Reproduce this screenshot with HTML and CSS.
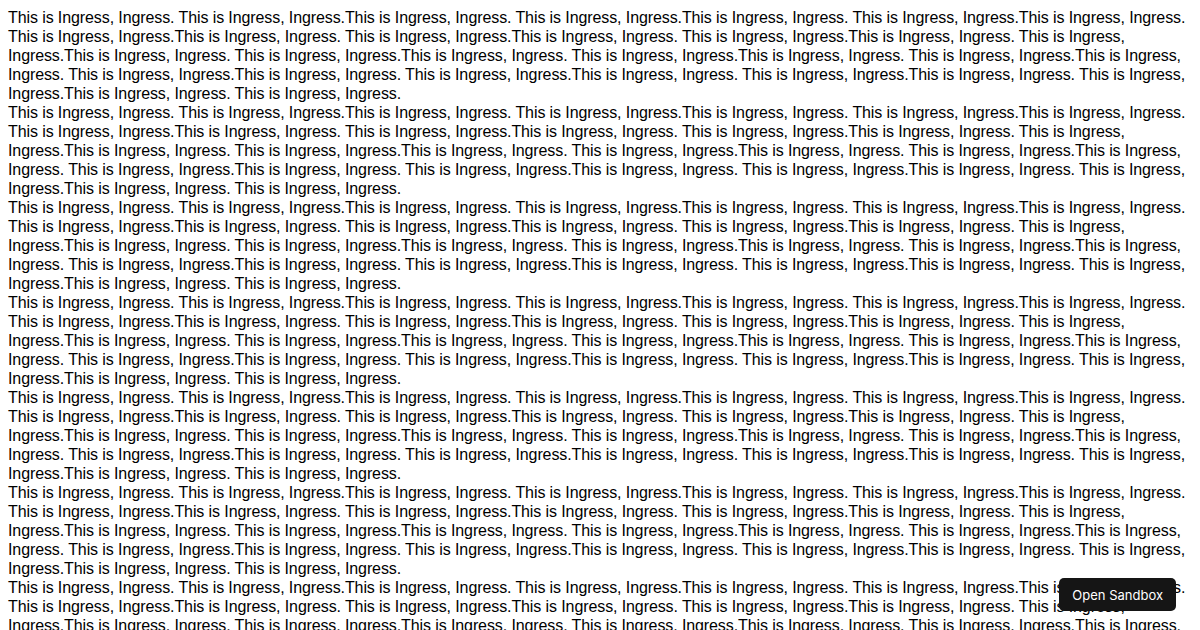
FILE: index.html
```html
<!DOCTYPE html>
<html lang="en">
<head>
<meta charset="utf-8">
<title>FolderFlip</title>
<link rel="stylesheet" href="styles.css">
</head>
<body>
<div class="page">
  <div class="text">This is Ingress, Ingress. This is Ingress, Ingress.This is Ingress, Ingress. This is Ingress, Ingress.This is Ingress, Ingress. This is Ingress, Ingress.This is Ingress, Ingress. This is Ingress, Ingress.This is Ingress, Ingress. This is Ingress, Ingress.This is Ingress, Ingress. This is Ingress, Ingress.This is Ingress, Ingress. This is Ingress, Ingress.This is Ingress, Ingress. This is Ingress, Ingress.This is Ingress, Ingress. This is Ingress, Ingress.This is Ingress, Ingress. This is Ingress, Ingress.This is Ingress, Ingress. This is Ingress, Ingress.This is Ingress, Ingress. This is Ingress, Ingress.This is Ingress, Ingress. This is Ingress, Ingress.This is Ingress, Ingress. This is Ingress, Ingress.This is Ingress, Ingress. This is Ingress, Ingress.</div>
  <div class="text">This is Ingress, Ingress. This is Ingress, Ingress.This is Ingress, Ingress. This is Ingress, Ingress.This is Ingress, Ingress. This is Ingress, Ingress.This is Ingress, Ingress. This is Ingress, Ingress.This is Ingress, Ingress. This is Ingress, Ingress.This is Ingress, Ingress. This is Ingress, Ingress.This is Ingress, Ingress. This is Ingress, Ingress.This is Ingress, Ingress. This is Ingress, Ingress.This is Ingress, Ingress. This is Ingress, Ingress.This is Ingress, Ingress. This is Ingress, Ingress.This is Ingress, Ingress. This is Ingress, Ingress.This is Ingress, Ingress. This is Ingress, Ingress.This is Ingress, Ingress. This is Ingress, Ingress.This is Ingress, Ingress. This is Ingress, Ingress.This is Ingress, Ingress. This is Ingress, Ingress.</div>
  <div class="text">This is Ingress, Ingress. This is Ingress, Ingress.This is Ingress, Ingress. This is Ingress, Ingress.This is Ingress, Ingress. This is Ingress, Ingress.This is Ingress, Ingress. This is Ingress, Ingress.This is Ingress, Ingress. This is Ingress, Ingress.This is Ingress, Ingress. This is Ingress, Ingress.This is Ingress, Ingress. This is Ingress, Ingress.This is Ingress, Ingress. This is Ingress, Ingress.This is Ingress, Ingress. This is Ingress, Ingress.This is Ingress, Ingress. This is Ingress, Ingress.This is Ingress, Ingress. This is Ingress, Ingress.This is Ingress, Ingress. This is Ingress, Ingress.This is Ingress, Ingress. This is Ingress, Ingress.This is Ingress, Ingress. This is Ingress, Ingress.This is Ingress, Ingress. This is Ingress, Ingress.</div>
  <div class="text">This is Ingress, Ingress. This is Ingress, Ingress.This is Ingress, Ingress. This is Ingress, Ingress.This is Ingress, Ingress. This is Ingress, Ingress.This is Ingress, Ingress. This is Ingress, Ingress.This is Ingress, Ingress. This is Ingress, Ingress.This is Ingress, Ingress. This is Ingress, Ingress.This is Ingress, Ingress. This is Ingress, Ingress.This is Ingress, Ingress. This is Ingress, Ingress.This is Ingress, Ingress. This is Ingress, Ingress.This is Ingress, Ingress. This is Ingress, Ingress.This is Ingress, Ingress. This is Ingress, Ingress.This is Ingress, Ingress. This is Ingress, Ingress.This is Ingress, Ingress. This is Ingress, Ingress.This is Ingress, Ingress. This is Ingress, Ingress.This is Ingress, Ingress. This is Ingress, Ingress.</div>
  <div class="text">This is Ingress, Ingress. This is Ingress, Ingress.This is Ingress, Ingress. This is Ingress, Ingress.This is Ingress, Ingress. This is Ingress, Ingress.This is Ingress, Ingress. This is Ingress, Ingress.This is Ingress, Ingress. This is Ingress, Ingress.This is Ingress, Ingress. This is Ingress, Ingress.This is Ingress, Ingress. This is Ingress, Ingress.This is Ingress, Ingress. This is Ingress, Ingress.This is Ingress, Ingress. This is Ingress, Ingress.This is Ingress, Ingress. This is Ingress, Ingress.This is Ingress, Ingress. This is Ingress, Ingress.This is Ingress, Ingress. This is Ingress, Ingress.This is Ingress, Ingress. This is Ingress, Ingress.This is Ingress, Ingress. This is Ingress, Ingress.This is Ingress, Ingress. This is Ingress, Ingress.</div>
  <div class="text">This is Ingress, Ingress. This is Ingress, Ingress.This is Ingress, Ingress. This is Ingress, Ingress.This is Ingress, Ingress. This is Ingress, Ingress.This is Ingress, Ingress. This is Ingress, Ingress.This is Ingress, Ingress. This is Ingress, Ingress.This is Ingress, Ingress. This is Ingress, Ingress.This is Ingress, Ingress. This is Ingress, Ingress.This is Ingress, Ingress. This is Ingress, Ingress.This is Ingress, Ingress. This is Ingress, Ingress.This is Ingress, Ingress. This is Ingress, Ingress.This is Ingress, Ingress. This is Ingress, Ingress.This is Ingress, Ingress. This is Ingress, Ingress.This is Ingress, Ingress. This is Ingress, Ingress.This is Ingress, Ingress. This is Ingress, Ingress.This is Ingress, Ingress. This is Ingress, Ingress.</div>
  <div class="text">This is Ingress, Ingress. This is Ingress, Ingress.This is Ingress, Ingress. This is Ingress, Ingress.This is Ingress, Ingress. This is Ingress, Ingress.This is Ingress, Ingress. This is Ingress, Ingress.This is Ingress, Ingress. This is Ingress, Ingress.This is Ingress, Ingress. This is Ingress, Ingress.This is Ingress, Ingress. This is Ingress, Ingress.This is Ingress, Ingress. This is Ingress, Ingress.This is Ingress, Ingress. This is Ingress, Ingress.This is Ingress, Ingress. This is Ingress, Ingress.This is Ingress, Ingress. This is Ingress, Ingress.This is Ingress, Ingress. This is Ingress, Ingress.This is Ingress, Ingress. This is Ingress, Ingress.This is Ingress, Ingress. This is Ingress, Ingress.This is Ingress, Ingress. This is Ingress, Ingress.</div>

  <section class="folder">
    <div class="folder-number">1</div>
    <h1 class="folder-title">FolderFlip Step 1</h1>
    <div class="text">This is Ingress, Ingress. This is Ingress, Ingress.This is Ingress, Ingress. This is Ingress, Ingress.This is Ingress, Ingress. This is Ingress, Ingress.This is Ingress, Ingress. This is Ingress, Ingress.This is Ingress, Ingress. This is Ingress, Ingress.This is Ingress, Ingress. This is Ingress, Ingress.This is Ingress, Ingress. This is Ingress, Ingress.This is Ingress, Ingress. This is Ingress, Ingress.This is Ingress, Ingress. This is Ingress, Ingress.This is Ingress, Ingress. This is Ingress, Ingress.This is Ingress, Ingress. This is Ingress, Ingress.This is Ingress, Ingress. This is Ingress, Ingress.This is Ingress, Ingress. This is Ingress, Ingress.This is Ingress, Ingress. This is Ingress, Ingress.This is Ingress, Ingress. This is Ingress, Ingress.</div>
  </section>
</div>

<a class="sandbox-btn" href="#">Open Sandbox</a>
</body>
</html>
```

FILE: styles.css
```css
html, body {
  margin: 0;
  padding: 0;
}

body {
  background: #ffffff;
  color: #000000;
  font-family: "Liberation Sans", Arial, sans-serif;
  font-size: 16px;
}

.page {
  padding: 8px;
}

.text {
  line-height: 19px;
  letter-spacing: -0.1px;
}

.folder {
  background: #f2aba3;
  border-radius: 16px 16px 0 0;
  min-height: 400px;
}

.folder-number {
  padding-top: 27px;
  font-size: 40px;
  line-height: 46px;
  color: #0000ff;
  text-align: center;
}

.folder-title {
  margin: 46px 0 41px;
  font-size: 40px;
  line-height: 46px;
  font-weight: 700;
  text-align: center;
}

.sandbox-btn {
  position: fixed;
  right: 24px;
  bottom: 19px;
  height: 33px;
  padding: 0 13px;
  display: flex;
  align-items: center;
  background: #151515;
  color: #ffffff;
  border-radius: 5px;
  font-family: Inter, "Noto Sans", sans-serif;
  font-size: 13px;
  text-decoration: none;
}
```
